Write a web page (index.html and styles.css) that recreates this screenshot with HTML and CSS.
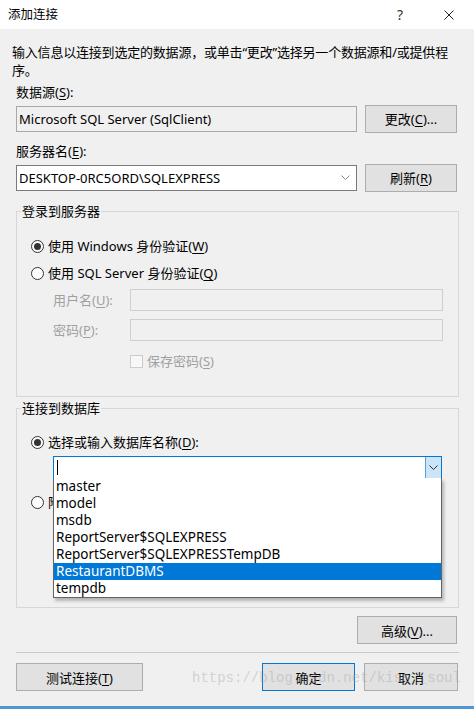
FILE: index.html
```html
<!DOCTYPE html>
<html lang="zh-CN">
<head>
<meta charset="utf-8">
<title>添加连接</title>
<link rel="stylesheet" href="styles.css">
</head>
<body>
<div class="window">
  <div class="titlebar">
    <span class="title">添加连接</span>
    <span class="help">?</span>
    <svg class="close" width="10" height="10" viewBox="0 0 10 10"><path d="M0.5 0.5 L9.5 9.5 M9.5 0.5 L0.5 9.5" stroke="#222" stroke-width="1" fill="none"/></svg>
  </div>
  <div class="content">
    <p class="desc">输入信息以连接到选定的数据源，或单击“更改”选择另一个数据源和/或提供程<br>序。</p>
    <div class="label">数据源(<u>S</u>):</div>
    <div class="row">
      <div class="field readonly">Microsoft SQL Server (SqlClient)</div>
      <button class="btn side">更改(<u>C</u>)...</button>
    </div>
    <div class="label label-2">服务器名(<u>E</u>):</div>
    <div class="row">
      <div class="field combo">
        <span class="combo-text">DESKTOP-0RC5ORD\SQLEXPRESS</span>
        <svg class="chev" width="9" height="5" viewBox="0 0 9 5"><path d="M0.5 0.5 L4.5 4.5 L8.5 0.5" stroke="#8a8a8a" stroke-width="1" fill="none"/></svg>
      </div>
      <button class="btn side">刷新(<u>R</u>)</button>
    </div>

    <fieldset class="group group-login">
      <legend>登录到服务器</legend>
      <div class="group-inner login-inner">
        <div class="radio-row"><span class="radio on"></span><span>使用 Windows 身份验证(<u>W</u>)</span></div>
        <div class="radio-row"><span class="radio"></span><span>使用 SQL Server 身份验证(<u>Q</u>)</span></div>
        <div class="cred-row"><span class="cred-label">用户名(<u>U</u>):</span><div class="cred-input"></div></div>
        <div class="cred-row"><span class="cred-label">密码(<u>P</u>):</span><div class="cred-input"></div></div>
        <div class="check-row"><span class="checkbox"></span><span class="disabled">保存密码(<u>S</u>)</span></div>
      </div>
    </fieldset>

    <fieldset class="group group-db">
      <legend>连接到数据库</legend>
      <div class="group-inner db-inner">
        <div class="radio-row"><span class="radio on"></span><span>选择或输入数据库名称(<u>D</u>):</span></div>
        <div class="db-combo">
          <span class="caret"></span>
          <span class="db-drop">
            <svg width="9" height="5" viewBox="0 0 9 5"><path d="M0.5 0.5 L4.5 4.5 L8.5 0.5" stroke="#333" stroke-width="1" fill="none"/></svg>
          </span>
          <ul class="db-list">
            <li>master</li>
            <li>model</li>
            <li>msdb</li>
            <li>ReportServer$SQLEXPRESS</li>
            <li>ReportServer$SQLEXPRESSTempDB</li>
            <li class="selected">RestaurantDBMS</li>
            <li>tempdb</li>
          </ul>
        </div>
        <div class="radio-row radio-attach"><span class="radio"></span><span>附加数据库文件(<u>H</u>):</span></div>
      </div>
    </fieldset>

    <div class="adv-row"><button class="btn adv">高级(<u>V</u>)...</button></div>
    <div class="separator"></div>
    <div class="footer">
      <button class="btn test">测试连接(<u>T</u>)</button>
      <span class="spacer"></span>
      <button class="btn ok">确定</button>
      <button class="btn cancel">取消</button>
    </div>
  </div>
  <div class="watermark">https://blog.csdn.net/kiss__soul</div>
  <div class="bottom-bar"></div>
</div>
</body>
</html>
```

FILE: styles.css
```css
html, body {
  margin: 0;
  padding: 0;
}
body {
  background: #f0f0f0;
  font-family: "Noto Sans", "Noto Sans CJK SC", sans-serif;
  font-size: 13px;
  line-height: 18px;
  color: #000;
  width: 474px;
  height: 709px;
  overflow: hidden;
}
.window {
  position: relative;
  width: 474px;
  height: 709px;
  display: flex;
  flex-direction: column;
}
u { text-decoration: underline; text-underline-offset: 2px; }

.titlebar {
  height: 29px;
  background: #fff;
  display: flex;
  align-items: center;
  padding-left: 8px;
  font-size: 12.5px;
}
.title { flex: 1; }
.help {
  width: 14px;
  text-align: center;
  font-size: 14px;
  margin-right: 37px;
  color: #333;
}
.close { margin-right: 20px; }

.content {
  padding: 14px 15px 0 16px;
  flex: 1;
}
.desc {
  margin: 0 0 0 -4px;
  line-height: 18px;
  white-space: nowrap;
  letter-spacing: -0.2px;
}
.label { margin-top: 4px; line-height: 18px; }
.label-2 { margin-top: 9px; }

.row {
  display: flex;
  align-items: center;
  gap: 8px;
  height: 29px;
  margin-top: 3px;
}
.field {
  width: 341px;
  height: 26px;
  box-sizing: border-box;
  border: 1px solid #7a7a7a;
  background: #fff;
  padding-left: 2px;
  line-height: 24px;
  white-space: nowrap;
}
.field.readonly {
  background: #f0f0f0;
  border-color: #a8a8a8;
}
.field.combo {
  display: flex;
  align-items: center;
}
.combo-text { flex: 1; }
.chev { margin-right: 6px; }

.btn {
  height: 28px;
  box-sizing: border-box;
  border: 1px solid #adadad;
  background: #e1e1e1;
  font-family: inherit;
  font-size: 13px;
  color: #000;
  padding: 0;
}
.btn.side { width: 92px; }

.group {
  margin: 10px 0 0 0;
  padding: 0;
  border: 1px solid #d7d7d7;
  min-width: 0;
}
.group legend {
  margin-left: 4px;
  padding: 0 1px;
  line-height: 18px;
}
.login-inner { padding: 17px 0 26px 14px; }
.group-db { margin-top: 2px; }
.db-inner { padding: 16px 0 96px 14px; }

.radio-row {
  display: flex;
  align-items: center;
  gap: 4px;
  height: 18px;
  white-space: nowrap;
}
.radio-row + .radio-row { margin-top: 9px; }
.radio {
  width: 13px;
  height: 13px;
  box-sizing: border-box;
  border: 1px solid #333;
  border-radius: 50%;
  background: #fff;
  display: flex;
  align-items: center;
  justify-content: center;
  flex: none;
}
.radio.on::after {
  content: "";
  width: 7px;
  height: 7px;
  border-radius: 50%;
  background: #333;
}

.cred-row {
  display: flex;
  align-items: center;
  height: 22px;
  margin-top: 7px;
  padding-left: 22px;
}
.cred-row + .cred-row { margin-top: 8px; }
.cred-label {
  width: 77px;
  color: #a0a0a0;
}
.cred-input {
  width: 313px;
  height: 22px;
  box-sizing: border-box;
  border: 1px solid #cfcfcf;
  background: #f0f0f0;
}
.check-row {
  display: flex;
  align-items: center;
  gap: 4px;
  height: 18px;
  margin-top: 11px;
  padding-left: 99px;
}
.checkbox {
  width: 13px;
  height: 13px;
  box-sizing: border-box;
  border: 1px solid #cccccc;
  background: #f7f7f7;
}
.disabled { color: #a0a0a0; }

.db-combo {
  position: relative;
  width: 389px;
  height: 23px;
  box-sizing: border-box;
  margin: 5px 0 0 22px;
  border: 1px solid #0078d7;
  background: #fff;
  display: flex;
  align-items: center;
}
.caret {
  width: 1px;
  height: 15px;
  background: #000;
  margin-left: 3px;
  flex: 1 0 auto;
  max-width: 1px;
}
.db-drop {
  margin-left: auto;
  width: 16px;
  height: 21px;
  box-sizing: border-box;
  border-left: 1px solid #569de5;
  background: #cce4f7;
  display: flex;
  align-items: center;
  justify-content: center;
}
.db-list {
  position: absolute;
  top: 100%;
  left: -1px;
  width: 389px;
  box-sizing: border-box;
  margin: 0;
  padding: 0;
  list-style: none;
  background: #fff;
  border: 1px solid #646464;
  border-top: none;
  box-shadow: 2px 3px 3px rgba(0, 0, 0, 0.25);
  z-index: 2;
  font-size: 13.5px;
}
.db-list li {
  height: 17px;
  line-height: 17px;
  padding-left: 2px;
  white-space: nowrap;
}
.db-list li.selected {
  background: #0078d7;
  color: #fff;
}
.radio-attach { margin-top: 14px; }

.adv-row {
  display: flex;
  justify-content: flex-end;
  margin-top: 8px;
  padding-right: 2px;
}
.btn.adv { width: 100px; }
.separator {
  margin-top: 8px;
  height: 0;
  border-top: 1px solid #c8c8c8;
}
.footer {
  display: flex;
  margin-top: 10px;
  padding-right: 1px;
  gap: 9px;
}
.spacer { flex: 1; }
.btn.test { width: 127px; }
.btn.ok { width: 93px; border: 1px solid #0078d7; }
.btn.cancel { width: 94px; }

.watermark {
  position: absolute;
  left: 192px;
  top: 669px;
  font-family: "Liberation Mono", monospace;
  font-size: 14px;
  line-height: 18px;
  color: rgba(160, 160, 160, 0.4);
  pointer-events: none;
  white-space: nowrap;
}
.bottom-bar {
  height: 3px;
  background: #4f97d3;
}
```
